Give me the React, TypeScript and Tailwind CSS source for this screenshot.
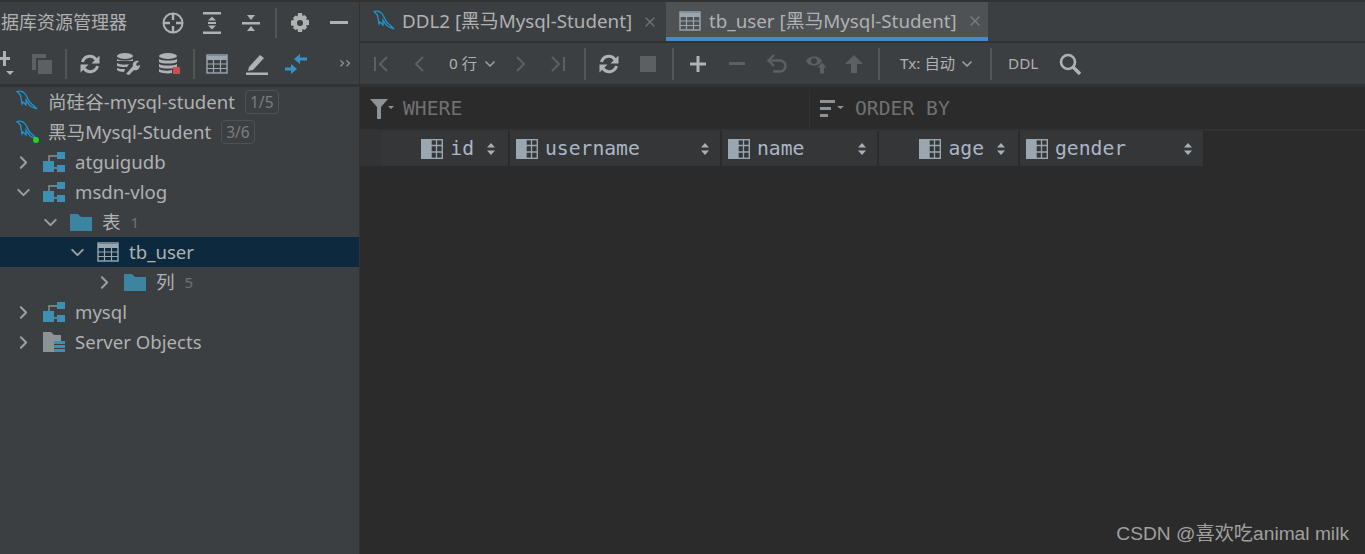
import { ChevronDown, ChevronRight, X } from 'lucide-react'

const sans = 'font-["Noto_Sans","Noto_Sans_CJK_SC",sans-serif]'

function Dolphin({ dot }: { dot?: boolean }) {
  return (
    <svg width="22" height="24" viewBox="0 0 22 24" fill="none" className="shrink-0 overflow-visible">
      <path
        d="M1 1.500C4 .5 8 1.500 10.500 6c1.500 4 3.500 7 6.500 9l4 4-5-2c-3-1-4-4-6-7l0 5-3-3-1 2-1.500-9z"
        stroke="#1d96d2"
        strokeWidth="1.300"
      />
      {dot && <circle cx="20" cy="20" r="3" fill="#22d321" />}
    </svg>
  )
}

function SchemaIcon() {
  return (
    <svg width="22" height="20" viewBox="0 0 22 20" className="shrink-0">
      <path d="M6 10V4h8" stroke="#8c9398" strokeWidth="1.400" fill="none" />
      <rect x="14" y="0" width="8" height="7" fill="#3d8fb3" />
      <rect x="0" y="9" width="11" height="11" fill="#3d8fb3" />
      <rect x="14" y="13" width="8" height="7" fill="#3d8fb3" />
      <path d="M11 16h3" stroke="#8c9398" strokeWidth="1.400" />
    </svg>
  )
}

function FolderIcon() {
  return (
    <svg width="22" height="18" viewBox="0 0 22 18" className="shrink-0">
      <path d="M0 1h8l3 3h11v14H0z" fill="#3d84a3" />
    </svg>
  )
}

function TableIcon({ size = 22 }: { size?: number }) {
  return (
    <svg width={size} height={size} viewBox="0 0 22 22" fill="none" className="shrink-0">
      <rect x="1" y="2" width="20" height="18" stroke="#9aa7b0" strokeWidth="1.400" />
      <path d="M1 3h20v4H1z" fill="#9aa7b0" />
      <path d="M1 11h20M1 15.500h20M7.500 7v13M14.500 7v13" stroke="#9aa7b0" strokeWidth="1.200" />
    </svg>
  )
}

function ColumnIcon() {
  return (
    <svg width="22" height="20" viewBox="0 0 22 20" fill="none" className="shrink-0">
      <rect x="0" y="0" width="10" height="20" fill="#9aa7b0" />
      <rect x="10" y="0.700" width="11.300" height="18.600" stroke="#9aa7b0" strokeWidth="1.400" />
      <path d="M10 6.500h11M10 13h11M15.500 1v18" stroke="#9aa7b0" strokeWidth="1.300" />
    </svg>
  )
}

function SortIcon() {
  return (
    <svg width="8" height="12" viewBox="0 0 8 12" className="shrink-0">
      <path d="M4 0l4 4.500H0zM4 12L0 7.500h8z" fill="#a9b0b5" />
    </svg>
  )
}

function RefreshIcon({ color = '#afb1b3' }: { color?: string }) {
  return (
    <svg width="20" height="20" viewBox="0 0 20 20" fill="none" className="shrink-0">
      <path d="M2.500 8a7.500 7.500 0 0 1 13-3l2 2.500" stroke={color} strokeWidth="3" />
      <path d="M17.500 12a7.500 7.500 0 0 1-13 3l-2-2.500" stroke={color} strokeWidth="3" />
      <path d="M19.500 1.500v8h-8zM.5 18.500v-8h8z" fill={color} />
    </svg>
  )
}

function TreeRow({
  indent,
  open,
  selected,
  icon,
  label,
  count,
  badge,
  chevron = true,
}: {
  indent: string
  open?: boolean
  selected?: boolean
  icon: React.ReactNode
  label: string
  count?: string
  badge?: string
  chevron?: boolean
}) {
  return (
    <div className={`flex h-[30px] items-center ${indent} ${selected ? 'bg-[#0d293e]' : ''}`}>
      {chevron && (
        <span className="mr-[9px] flex w-[22px] shrink-0 justify-center">
          {open ? (
            <ChevronDown size={21} color="#9da0a2" strokeWidth={2.300} />
          ) : (
            <ChevronRight size={21} color="#9da0a2" strokeWidth={2.300} />
          )}
        </span>
      )}
      {icon}
      <span className="ml-[10px] text-[18.600px] whitespace-nowrap text-[#afb1b3]">{label}</span>
      {count && <span className="ml-[10px] text-[15px] text-[#6f7274]">{count}</span>}
      {badge && (
        <span className="ml-[10px] rounded-[4px] border border-[#4e5254] px-[4px] text-[15.500px] leading-[22px] text-[#7a7d7f]">
          {badge}
        </span>
      )}
    </div>
  )
}

function ColHead({
  width,
  name,
  right,
}: {
  width: string
  name: string
  right?: boolean
}) {
  return (
    <div
      className={`mr-[2px] flex h-[35px] shrink-0 items-center bg-[#353637] pl-[6px] ${width} ${
        right ? 'justify-end pr-[13px]' : 'pr-[11px]'
      }`}
    >
      <ColumnIcon />
      <span
        className={`ml-[7px] font-["DejaVu_Sans_Mono",monospace] text-[19.700px] text-[#a9b7c6] ${
          right ? 'mr-[13px]' : 'flex-1'
        }`}
      >
        {name}
      </span>
      <SortIcon />
    </div>
  )
}

export default function App() {
  return (
    <div className={`flex h-[554px] w-[1365px] overflow-hidden bg-[#2b2b2b] ${sans}`}>
      {/* Left panel */}
      <div className="h-full w-[359px] shrink-0 overflow-hidden bg-[#3c3f41]">
        <div className="flex h-[43px] items-center border-t-2 border-[#323232] pl-[1px]">
          <span className="w-[150px] text-[18px] whitespace-nowrap text-[#afb1b3]">据库资源管理器</span>
          <svg width="22" height="22" viewBox="0 0 22 22" fill="none" className="ml-[11px]">
            <circle cx="11" cy="11" r="9.500" stroke="#afb1b3" strokeWidth="2" />
            <path d="M11 2v6M11 14v6M2 11h6M14 11h6" stroke="#afb1b3" strokeWidth="2.400" />
          </svg>
          <svg width="20" height="22" viewBox="0 0 20 22" className="ml-[18px]" fill="#afb1b3">
            <path d="M1 0h18v2.400H1zM1 19.600h18V22H1zM10 4.500l4 4H6zM10 17.500l-4-4h8z" />
            <path d="M6 10h8v2H6z" />
          </svg>
          <svg width="20" height="22" viewBox="0 0 20 22" className="ml-[19px]" fill="#afb1b3">
            <path d="M1 10h18v2.400H1zM10 8L6 3h8zM10 14l4 5H6z" />
          </svg>
          <div className="mr-[13px] ml-[14px] h-[30px] w-[2px] bg-[#515658]" />
          <svg width="20" height="20" viewBox="0 0 20 20" fill="#afb1b3">
            <path
              fillRule="evenodd"
              d="M8 0h4l.5 3 2-.9 2.500 2.400-1 2 3 .5v5l-3 .5 1 2-2.500 2.500-2-1-.5 3H8l-.5-3-2 1L3 15l1-2-3-.5v-5l3-.5-1-2 2.500-2.400 2 .9zM10 7a3 3 0 1 0 0 6 3 3 0 0 0 0-6z"
            />
          </svg>
          <div className="ml-[20px] h-[2.500px] w-[18px] bg-[#afb1b3]" />
        </div>

        <div className="flex h-[44px] items-center border-b-[3px] border-[#323232]">
          <svg width="17" height="26" viewBox="0 0 17 26" fill="#afb1b3" className="ml-0">
            <path d="M-2 6h5V0h3v6h4v3H6v6H3V9h-5zM6 20h8l-4 4z" />
          </svg>
          <svg width="20" height="20" viewBox="0 0 20 20" fill="#5c6062" className="ml-[15px]">
            <path d="M0 0h14v4H4v12H0z" />
            <path d="M6 6h14v14H6z" />
          </svg>
          <div className="mr-[13px] ml-[13px] h-[30px] w-[2px] bg-[#515658]" />
          <RefreshIcon />
          <svg width="24" height="22" viewBox="0 0 24 22" fill="#afb1b3" className="ml-[16px]">
            <ellipse cx="9" cy="3" rx="8" ry="3" />
            <path d="M1 6c3 2 12 2 16 0v2H1zM1 10c3 2 9 2 12 1l-2 3c-3 0-7 0-10-1zM1 15c2 1 5 1 8 1l-1 3c-3 0-6-1-7-2z" />
            <path d="M10 21l7-8c-1-3 2-6 6-5l-3 3 1 2 3-1c0 4-3 6-6 5l-5 5z" />
          </svg>
          <svg width="24" height="24" viewBox="0 0 24 24" fill="#afb1b3" className="ml-[19px]">
            <ellipse cx="9" cy="4" rx="9" ry="3" />
            <path d="M0 7c3 2 15 2 18 0v3c-3 2-15 2-18 0zM0 12c3 2 15 2 18 0v3c-3 2-15 2-18 0zM0 17c3 2 9 2 13 1v3c-4 1-10 0-13-1z" />
            <path d="M14 15h7v7h-7z" fill="#c94f4f" />
          </svg>
          <div className="mr-[11px] ml-[10px] h-[30px] w-[2px] bg-[#515658]" />
          <TableIcon />
          <svg width="22" height="22" viewBox="0 0 22 22" fill="#afb1b3" className="ml-[18px]">
            <path d="M3 14L14 2l4 3-11 12-5 1zM0 19.500h22V22H0z" />
          </svg>
          <svg width="22" height="22" viewBox="0 0 22 22" fill="#3592c4" className="ml-[17px]">
            <path d="M9 6l6-5v3.500h7v3h-7V11zM12 16l-6 5v-3.500H0v-3h6V11z" />
          </svg>
          <span className="ml-[32px] font-['DejaVu_Sans'] text-[15px] text-[#9da0a2]">››</span>
        </div>

        <div>
          <TreeRow
            indent="pl-[16px]"
            chevron={false}
            icon={<Dolphin />}
            label="尚硅谷-mysql-student"
            badge="1/5"
          />
          <TreeRow indent="pl-[16px]" chevron={false} icon={<Dolphin dot />} label="黑马Mysql-Student" badge="3/6" />
          <TreeRow indent="pl-[12px]" icon={<SchemaIcon />} label="atguigudb" />
          <TreeRow indent="pl-[12px]" open icon={<SchemaIcon />} label="msdn-vlog" />
          <TreeRow indent="pl-[39px]" open icon={<FolderIcon />} label="表" count="1" />
          <TreeRow indent="pl-[66px]" open selected icon={<TableIcon />} label="tb_user" />
          <TreeRow indent="pl-[93px]" icon={<FolderIcon />} label="列" count="5" />
          <TreeRow indent="pl-[12px]" icon={<SchemaIcon />} label="mysql" />
          <TreeRow
            indent="pl-[12px]"
            icon={
              <svg width="22" height="20" viewBox="0 0 22 20" className="shrink-0">
                <path d="M0 0h8l3 3h7v6h-7v11H0z" fill="#8c9398" />
                <path d="M11 9h11v3H11zM11 13h11v3H11zM11 17h11v3H11z" fill="#3d8fb3" />
              </svg>
            }
            label="Server Objects"
          />
        </div>
      </div>
      <div className="h-full w-[1px] shrink-0 bg-[#323232]" />

      {/* Right side */}
      <div className="relative flex min-w-0 flex-1 flex-col">
        {/* Tabs */}
        <div className="flex h-[43px] border-t-2 border-b-2 border-[#323232] bg-[#3c3f41]">
          <div className="flex w-[306px] items-center pl-[13px]">
            <Dolphin />
            <span className="ml-[7px] text-[18.800px] whitespace-nowrap text-[#afb1b3]">DDL2 [黑马Mysql-Student]</span>
            <X size={16} color="#6f7274" className="ml-[10px]" />
          </div>
          <div className="flex w-[322px] items-center border-b-[4px] border-[#4a88c7] bg-[#4e5254] pt-[3px] pl-[13px]">
            <TableIcon />
            <span className="ml-[8px] text-[18.800px] whitespace-nowrap text-[#afb1b3]">tb_user [黑马Mysql-Student]</span>
            <X size={16} color="#7a7d7f" className="ml-[10px]" />
          </div>
        </div>

        {/* Data toolbar */}
        <div className="flex h-[44px] items-center border-b-[3px] border-[#323232] bg-[#3c3f41]">
          <svg width="16" height="16" viewBox="0 0 16 16" fill="none" stroke="#5c6062" strokeWidth="2" className="ml-[13px]">
            <path d="M2 1v14M14 1L7 8l7 7" />
          </svg>
          <svg width="12" height="16" viewBox="0 0 12 16" fill="none" stroke="#5c6062" strokeWidth="2" className="ml-[24px]">
            <path d="M10 1L3 8l7 7" />
          </svg>
          <span className="ml-[24px] text-[15.300px] whitespace-nowrap text-[#afb1b3]">0 行</span>
          <ChevronDown size={16} color="#9da0a2" strokeWidth={2.500} className="ml-[5px]" />
          <svg width="12" height="16" viewBox="0 0 12 16" fill="none" stroke="#5c6062" strokeWidth="2" className="ml-[17px]">
            <path d="M2 1l7 7-7 7" />
          </svg>
          <svg width="16" height="16" viewBox="0 0 16 16" fill="none" stroke="#5c6062" strokeWidth="2" className="ml-[23px]">
            <path d="M14 1v14M2 1l7 7-7 7" />
          </svg>
          <div className="mr-[13px] ml-[18px] h-8 w-[2px] bg-[#515658]" />
          <RefreshIcon />
          <div className="ml-[21px] h-[16px] w-[16px] bg-[#5c6062]" />
          <div className="mr-[16px] ml-[16px] h-8 w-[2px] bg-[#515658]" />
          <svg width="16" height="16" viewBox="0 0 16 16" fill="#afb1b3">
            <path d="M6.500 0h3v6.500H16v3H9.500V16h-3V9.500H0v-3h6.500z" />
          </svg>
          <div className="ml-[23px] h-[3px] w-[16px] bg-[#5c6062]" />
          <svg width="20" height="20" viewBox="0 0 20 20" fill="none" stroke="#5c6062" strokeWidth="2.400" className="ml-[22px]">
            <path d="M7 1L1.500 6.500 7 12" />
            <path d="M2 6.500h11a5.500 5.500 0 0 1 0 11H6" />
          </svg>
          <svg width="22" height="22" viewBox="0 0 22 22" fill="#5c6062" className="ml-[19px]">
            <path fillRule="evenodd" d="M0 8c3-6 13-6 16 0-3 6-13 6-16 0zm8-3a3 3 0 1 0 0 6 3 3 0 0 0 0-6z" />
            <path d="M16 9l5.500 6h-3v6h-5v-6h-3z" stroke="#3c3f41" strokeWidth="1" />
          </svg>
          <svg width="20" height="20" viewBox="0 0 20 20" fill="#5c6062" className="ml-[16px]">
            <path d="M10 1l9 9h-6v9H7v-9H1z" />
          </svg>
          <div className="mr-[20px] ml-[14px] h-8 w-[2px] bg-[#515658]" />
          <span className="text-[15.300px] whitespace-nowrap text-[#afb1b3]">Tx: 自动</span>
          <ChevronDown size={16} color="#9da0a2" strokeWidth={2.500} className="ml-[4px]" />
          <div className="mr-[16px] ml-[15px] h-8 w-[2px] bg-[#515658]" />
          <span className="text-[15.300px] text-[#afb1b3]">DDL</span>
          <svg width="22" height="22" viewBox="0 0 22 22" fill="none" stroke="#afb1b3" className="ml-[21px]">
            <circle cx="9" cy="9" r="7" strokeWidth="2.600" />
            <path d="M14 14l7 7" strokeWidth="3.400" />
          </svg>
        </div>

        {/* Filter row */}
        <div className="flex h-[44px] border-b-2 border-[#323232] pt-[2px] font-['DejaVu_Sans_Mono',monospace] text-[19.700px] text-[#6f7274]">
          <div className="flex w-[450px] items-center border-r border-[#323232] pl-[10px]">
            <svg width="24" height="20" viewBox="0 0 24 20" className="shrink-0">
              <path d="M0 0h18l-7 8v12H7V8z" fill="#8c9398" />
              <path d="M18 7h6l-3 3z" fill="#8c9398" />
            </svg>
            <span className="ml-[9px]">WHERE</span>
          </div>
          <div className="flex items-center pl-[10px]">
            <svg width="24" height="18" viewBox="0 0 24 18" fill="#8c9398" className="shrink-0">
              <path d="M0 0h15v3H0zM0 7h11v3H0zM0 14h8v3H0zM17 6h7l-3.500 3z" />
            </svg>
            <span className="ml-[11px]">ORDER BY</span>
          </div>
        </div>

        {/* Result table header */}
        <div className="flex">
          <div className="h-[35px] w-[22px] shrink-0 bg-[#323334]" />
          <ColHead width="w-[126px]" name="id" right />
          <ColHead width="w-[210px]" name="username" />
          <ColHead width="w-[155px]" name="name" />
          <ColHead width="w-[139px]" name="age" right />
          <ColHead width="w-[183px]" name="gender" />
        </div>

        <div className="absolute right-[16px] bottom-[5px] font-['Liberation_Sans','Noto_Sans_CJK_SC',sans-serif] text-[19.200px] text-[#a0a0a0]">
          CSDN @喜欢吃animal milk
        </div>
      </div>
    </div>
  )
}
